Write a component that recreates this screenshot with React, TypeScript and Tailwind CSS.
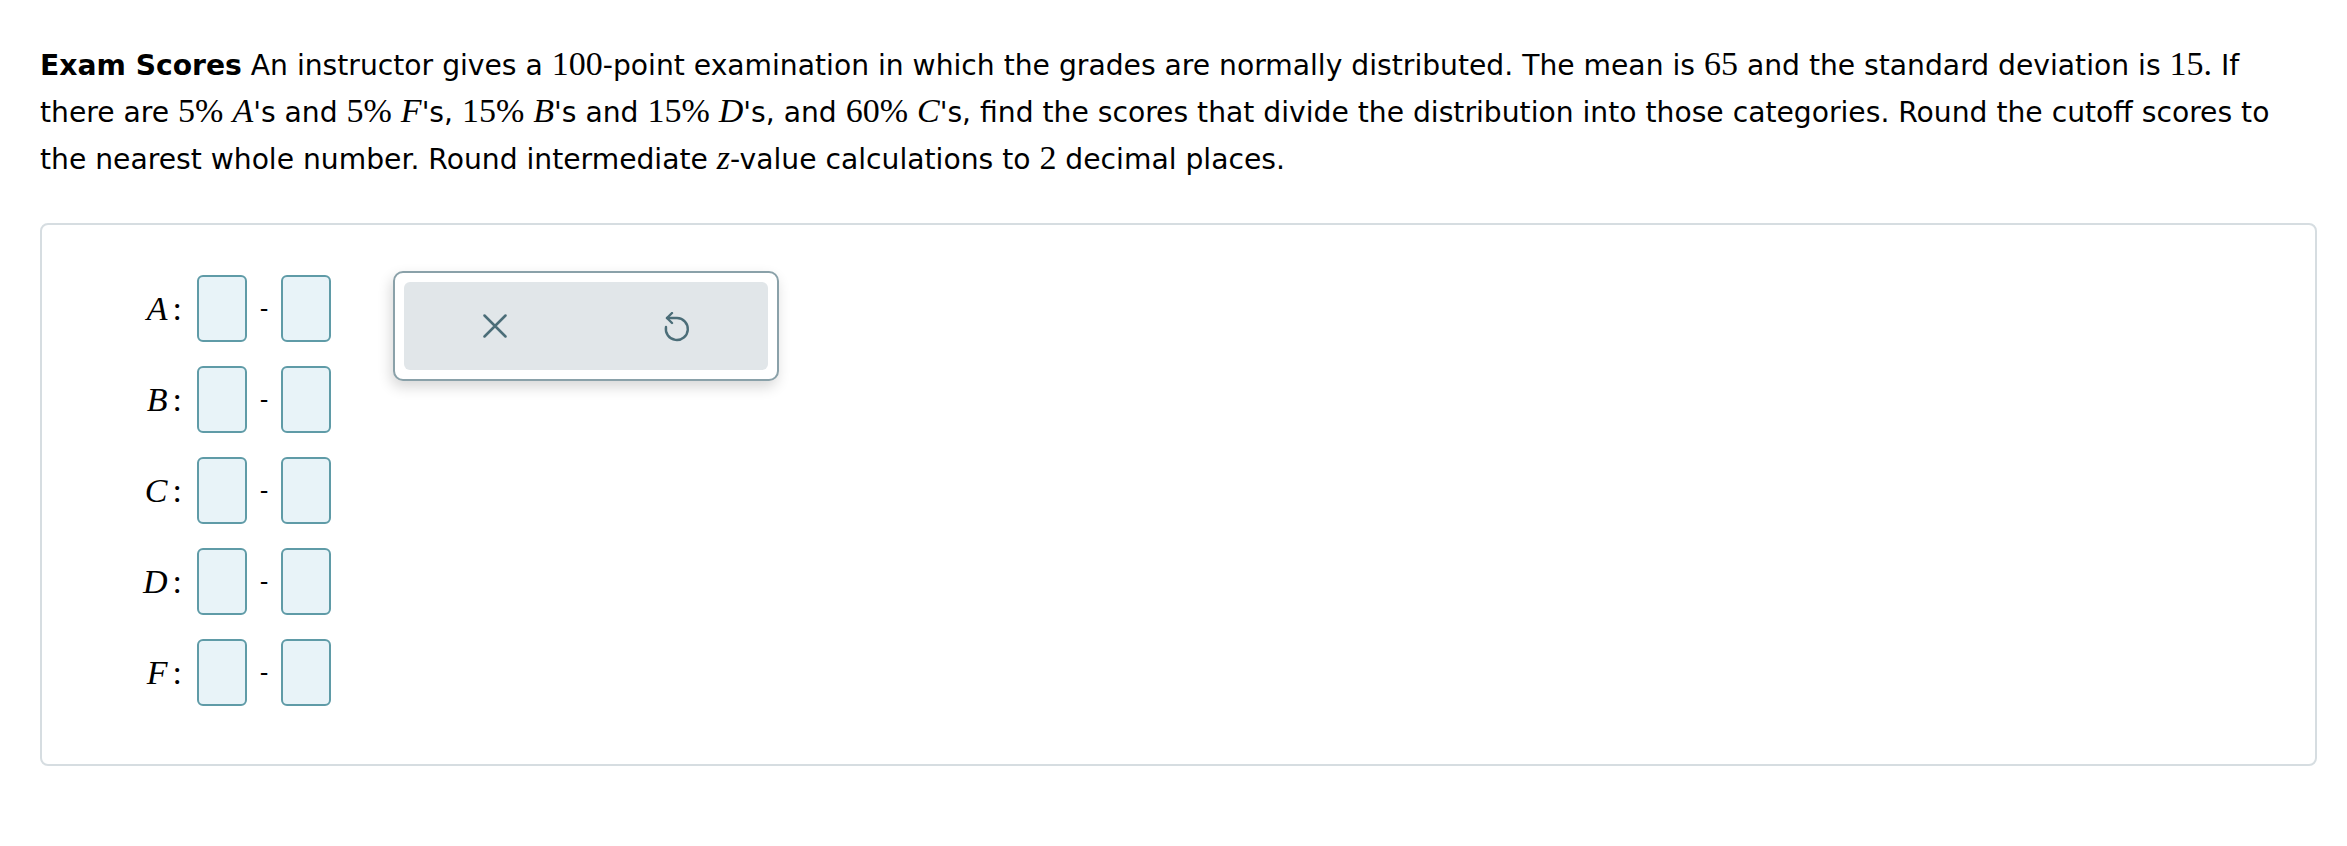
const M = ({ children, i }: { children: React.ReactNode; i?: boolean }) => (
  <span className={`font-['Liberation_Serif',serif] text-[34px] leading-none ${i ? 'italic' : ''}`}>{children}</span>
);

const rows = ['A', 'B', 'C', 'D', 'F'];

const AnswerBox = () => (
  <div className="w-[50px] h-[67px] rounded-[6px] border-2 border-[#5f9ba7] bg-[#e8f3f8]" />
);

const App = () => {
  return (
    <div className="min-h-screen bg-white pl-[40px] pr-[30px] pt-[42px] text-black font-['DejaVu_Sans',sans-serif]">
      <p className="text-[28.2px] leading-[47px] whitespace-nowrap">
        <span className="font-bold">Exam Scores</span> An instructor gives a <M>100</M>-point examination in which the
        grades are normally distributed. The mean is <M>65</M> and the standard deviation is <M>15.</M> If
        <br />
        there are <M>5%</M> <M i>A</M>'s and <M>5%</M> <M i>F</M>'s, <M>15%</M> <M i>B</M>'s and <M>15%</M>{' '}
        <M i>D</M>'s, and <M>60%</M> <M i>C</M>'s, find the scores that divide the distribution into those categories.
        Round the cutoff scores to
        <br />
        the nearest whole number. Round intermediate <M i>z</M>-value calculations to <M>2</M> decimal places.
      </p>

      <div className="mt-[40px] h-[543px] w-[2277px] rounded-[8px] border-2 border-[#d6dde1] pt-[46px] flex items-start">
        <div className="flex flex-col gap-[24px] pt-[4px]">
          {rows.map((r) => (
            <div key={r} className="flex items-center h-[67px]">
              <div className="w-[140px] text-right font-['Liberation_Serif',serif] text-[34px]">
                <span className="italic">{r}</span>
                <span className="ml-[5px]">:</span>
              </div>
              <div className="ml-[15px]">
                <AnswerBox />
              </div>
              <span className="w-[34px] text-center text-[24px]">-</span>
              <AnswerBox />
            </div>
          ))}
        </div>

        <div className="ml-[62px] w-[386px] h-[110px] rounded-[10px] border-2 border-[#8aa1a9] bg-white p-[9px] shadow-[-2px_6px_14px_rgba(0,0,0,0.16)]">
          <div className="flex h-full rounded-[6px] bg-[#e1e6e9]">
            <button className="flex flex-1 items-center justify-center">
              <svg width="24" height="24" viewBox="0 0 24 24" fill="none" stroke="#4b6d78" strokeWidth="2.5" strokeLinecap="round">
                <path d="M1.5 1.5L22.5 22.5M22.5 1.5L1.5 22.5" />
              </svg>
            </button>
            <button className="flex flex-1 items-center justify-center pt-[2px]">
              <svg width="28" height="30" viewBox="0 -1 28 30" fill="none" stroke="#4b6d78" strokeWidth="2.4" strokeLinecap="round" strokeLinejoin="round">
                <path d="M4 5H14A11 11 0 1 1 3 14" />
                <path d="M9 0L4 5L9 10" />
              </svg>
            </button>
          </div>
        </div>
      </div>
    </div>
  );
};

export default App;
